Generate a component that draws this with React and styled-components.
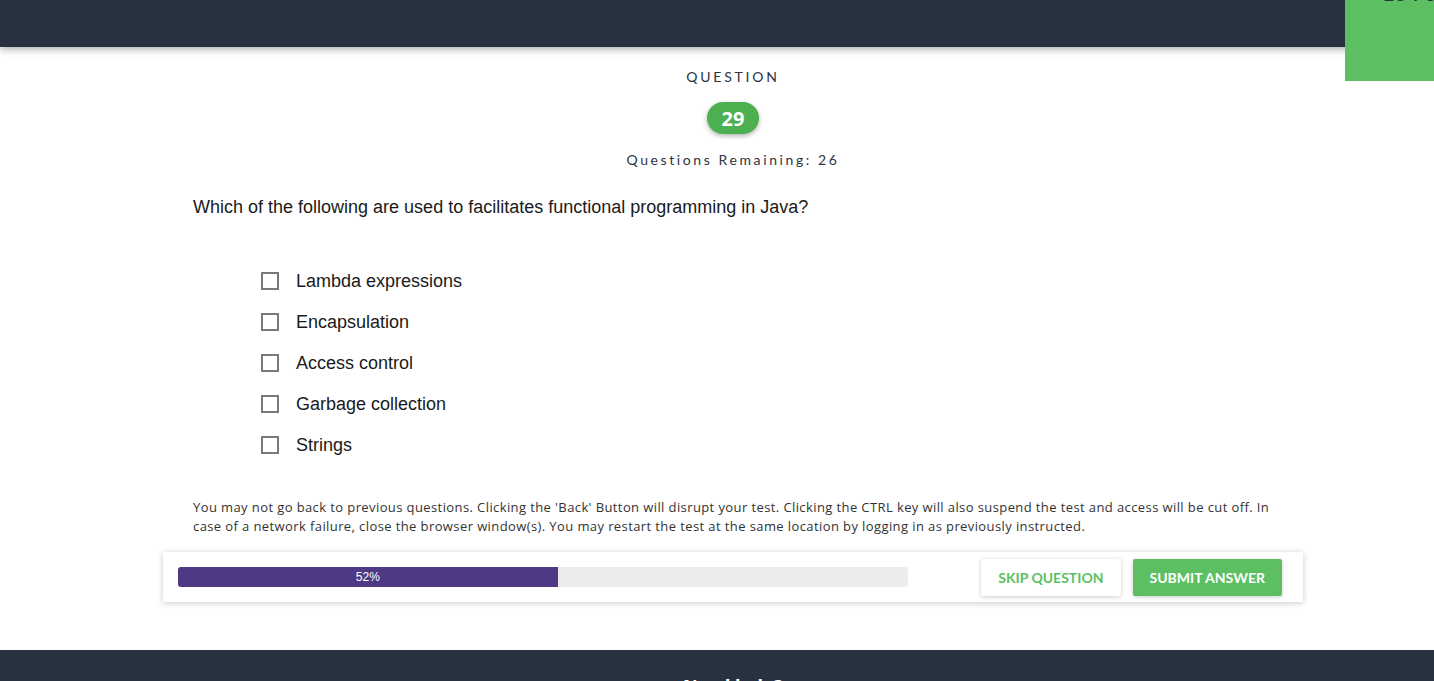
import React, { useState } from 'react'
import styled, { createGlobalStyle } from 'styled-components'

const GlobalStyle = createGlobalStyle`
    body {
        margin: 0;
        background: #fff;
        font-family: "Liberation Sans", Arial, sans-serif;
        overflow: hidden;
    }
`

const Header = styled.header`
    height: 47px;
    background-color: #27313f;
    box-shadow: 0 2px 8px rgba(0, 0, 0, .35);
    position: relative;
    z-index: 1;
`

const TimerBox = styled.div`
    position: fixed;
    top: 0;
    right: 0;
    width: 89px;
    height: 81px;
    background-color: #5cbf62;
    z-index: 2;
    overflow: hidden;

    span {
        position: absolute;
        top: -21px;
        left: 37px;
        font-family: Lato, sans-serif;
        font-weight: 700;
        font-size: 22px;
        color: #27313f;
        white-space: nowrap;
    }
`

const Main = styled.main`
    width: 1140px;
    margin-left: 163px;
    padding-top: 20px;
    padding-bottom: 48px;
`

const Heading = styled.div`
    display: flex;
    flex-direction: column;
    align-items: center;
    font-family: Lato, "Open Sans", sans-serif;
    color: #2c3442;

    .label {
        font-size: 14px;
        letter-spacing: 2.8px;
        line-height: 20px;
        margin-top: 0;
    }

    .remaining {
        font-size: 14px;
        letter-spacing: 2.6px;
        line-height: 20px;
        margin-top: 16px;
    }
`

const Badge = styled.div`
    margin-top: 15px;
    width: 52px;
    height: 32px;
    border-radius: 16px;
    background-color: #4caf50;
    box-shadow: 0 2px 5px rgba(0, 0, 0, .3);
    color: #fff;
    font-family: "Open Sans", sans-serif;
    font-weight: 700;
    font-size: 20px;
    display: flex;
    align-items: center;
    justify-content: center;
`

const Question = styled.p`
    margin: 27px 0 0 30px;
    font-size: 18px;
    line-height: 20px;
    color: #1a1a1a;
`

const Options = styled.div`
    margin: 54px 0 0 98px;
    display: flex;
    flex-direction: column;
    gap: 21px;
`

const Option = styled.label`
    display: flex;
    align-items: center;
    height: 20px;
    font-size: 18px;
    color: #1a1a1a;
    cursor: pointer;
`

const Box = styled.span`
    width: 14px;
    height: 14px;
    border: 2px solid ${p => p.checked ? '#4caf50' : '#7a7a7a'};
    background: ${p => p.checked ? '#4caf50' : '#fff'};
    margin-right: 17px;
`

const Notice = styled.p`
    margin: 43px 0 0 30px;
    width: 1085px;
    font-family: "Open Sans", sans-serif;
    font-size: 13px;
    letter-spacing: .4px;
    line-height: 19px;
    color: #333;
`

const ActionBar = styled.div`
    margin-top: 16px;
    height: 50px;
    background: #fff;
    box-shadow: 0 1px 6px rgba(0, 0, 0, .22);
    display: flex;
    align-items: center;
    padding: 0 21px 0 15px;
`

const Track = styled.div`
    width: 730px;
    height: 20px;
    background: #ececec;
    border-radius: 3px;
    overflow: hidden;
    margin-right: auto;
`

const Fill = styled.div`
    height: 100%;
    background: #4e3a84;
    color: #fff;
    font-size: 12px;
    line-height: 20px;
    text-align: center;
`

const Button = styled.button`
    height: 37px;
    padding: 0 17px;
    margin-left: ${p => p.primary ? '12px' : '0'};
    border: none;
    border-radius: 2px;
    background: ${p => p.primary ? '#5cbf62' : '#fff'};
    color: ${p => p.primary ? '#fff' : '#5cbf62'};
    box-shadow: 0 1px 4px rgba(0, 0, 0, .2);
    font-family: Lato, sans-serif;
    font-weight: 700;
    font-size: 14px;
    text-transform: uppercase;
    cursor: pointer;
`

const Footer = styled.footer`
    background: #27313f;
    height: 120px;
    padding-top: 24px;
    box-sizing: border-box;
    text-align: center;
    color: #fff;
    font-family: "Open Sans", sans-serif;
    font-weight: 700;
    font-size: 18px;

    span {
        margin-left: 32px;
    }
`

const answers = ['Lambda expressions', 'Encapsulation', 'Access control', 'Garbage collection', 'Strings']

export default function App() {
    const [checked, setChecked] = useState(answers.map(() => false))
    const progress = 52

    const toggle = i => () => {
        const lst = [...checked]
        lst[i] = !lst[i]
        setChecked(lst)
    }

    return (
        <>
            <GlobalStyle />
            <Header />
            <TimerBox><span>15 : 0</span></TimerBox>
            <Main>
                <Heading>
                    <div className="label">QUESTION</div>
                    <Badge>29</Badge>
                    <div className="remaining">Questions Remaining: 26</div>
                </Heading>
                <Question>Which of the following are used to facilitates functional programming in Java?</Question>
                <Options>
                    {answers.map((a, i) => (
                        <Option key={i} onClick={toggle(i)}>
                            <Box checked={checked[i]} />
                            {a}
                        </Option>
                    ))}
                </Options>
                <Notice>
                    You may not go back to previous questions. Clicking the 'Back' Button will disrupt your test. Clicking the CTRL key will also suspend the test and access will be cut off. In case of a network failure, close the browser window(s). You may restart the test at the same location by logging in as previously instructed.
                </Notice>
                <ActionBar>
                    <Track>
                        <Fill style={{ width: `${progress}%` }}>{progress}%</Fill>
                    </Track>
                    <Button>Skip Question</Button>
                    <Button primary>Submit Answer</Button>
                </ActionBar>
            </Main>
            <Footer><span>Need help?</span></Footer>
        </>
    )
}
